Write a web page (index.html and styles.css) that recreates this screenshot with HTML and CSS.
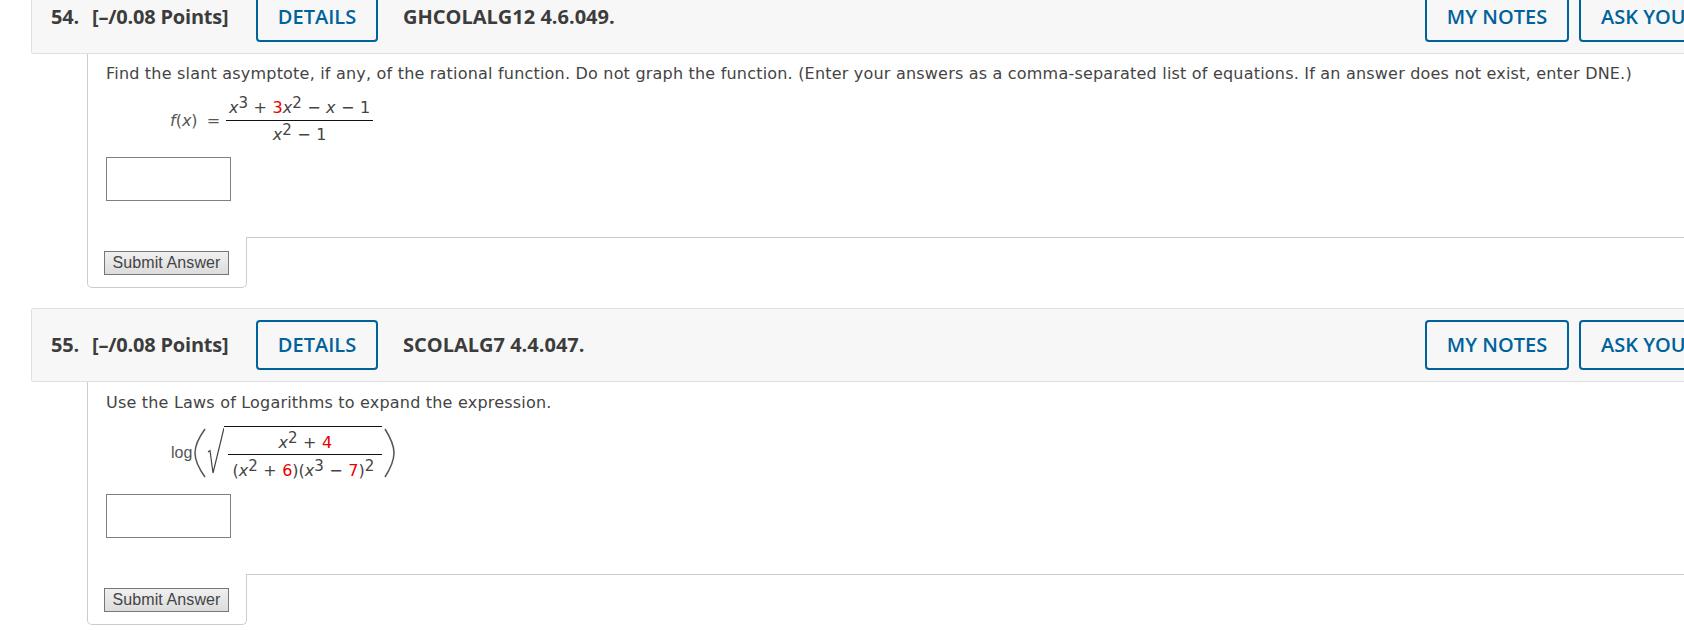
FILE: index.html
```html
<!DOCTYPE html>
<html lang="en">
<head>
<meta charset="utf-8">
<title>Questions</title>
<link rel="stylesheet" href="styles.css">
</head>
<body>
<main class="page">
  <section class="question">
    <header class="qhead">
      <span class="points"><span class="num">54.</span>[–/0.08 Points]</span>
      <a class="btn details">DETAILS</a>
      <span class="ref">GHCOLALG12 4.6.049.</span>
      <a class="btn notes">MY NOTES</a>
      <a class="btn ask">ASK YOUR TEACHER</a>
    </header>
    <div class="content">
      <p class="prompt">Find the slant asymptote, if any, of the rational function. Do not graph the function. (Enter your answers as a comma-separated list of equations. If an answer does not exist, enter DNE.)</p>
      <div class="math math-one">
        <span class="lhs"><i>f</i>(<i>x</i>) =</span>
        <span class="frac">
          <span class="top"><i>x</i><sup>3</sup> + <b class="red">3</b><i>x</i><sup>2</sup> − <i>x</i> − 1</span>
          <span class="bot"><i>x</i><sup>2</sup> − 1</span>
        </span>
      </div>
      <input class="answer" type="text" aria-label="Answer">
    </div>
    <div class="foot">
      <div class="submit-box"><button class="submit" type="button">Submit Answer</button></div>
      <div class="foot-rest"></div>
    </div>
  </section>
  <section class="question">
    <header class="qhead">
      <span class="points"><span class="num">55.</span>[–/0.08 Points]</span>
      <a class="btn details">DETAILS</a>
      <span class="ref">SCOLALG7 4.4.047.</span>
      <a class="btn notes">MY NOTES</a>
      <a class="btn ask">ASK YOUR TEACHER</a>
    </header>
    <div class="content">
      <p class="prompt prompt-low">Use the Laws of Logarithms to expand the expression.</p>
      <div class="math math-two">
        <span class="log">log</span>
        <svg class="paren" width="12" height="50" viewBox="0 0 12 50" aria-hidden="true"><path d="M11 1C3 12 1 18 1 25S3 38 11 49" fill="none" stroke="#555" stroke-width="1.500"/></svg>
        <svg class="radical" width="17" height="50" viewBox="0 0 17 50" aria-hidden="true"><path d="M1 24L3 22.500L6 45L17 0" fill="none" stroke="#444" stroke-width="1.200"/></svg>
        <span class="radicand">
          <span class="frac frac-root">
            <span class="top"><i>x</i><sup>2</sup> + <b class="red">4</b></span>
            <span class="bot">(<i>x</i><sup>2</sup> + <b class="red">6</b>)(<i>x</i><sup>3</sup> − <b class="red">7</b>)<sup>2</sup></span>
          </span>
        </span>
        <svg class="paren paren-close" width="11" height="50" viewBox="0 0 11 50" aria-hidden="true"><path d="M1 1C8 12 10 18 10 25S8 38 1 49" fill="none" stroke="#555" stroke-width="1.500"/></svg>
      </div>
      <input class="answer" type="text" aria-label="Answer">
    </div>
    <div class="foot">
      <div class="submit-box"><button class="submit" type="button">Submit Answer</button></div>
      <div class="foot-rest"></div>
    </div>
  </section>
</main>
</body>
</html>
```
FILE: styles.css
```css
html, body {
  margin: 0;
  padding: 0;
  height: 630px;
  overflow: hidden;
  background: #fff;
}

.page {
  width: 1900px;
  margin: -20px 0 0 31px;
  font-family: "DejaVu Sans", sans-serif;
  color: #444;
}

.question {
  margin-bottom: 20px;
}

.qhead {
  display: flex;
  align-items: center;
  height: 72px;
  padding: 0 0 0 19px;
  background: #f7f7f7;
  border: 1px solid #e0e0e0;
  border-radius: 2px;
  font-family: "Open Sans", sans-serif;
  font-size: 20px;
  font-weight: 700;
  color: #3c3c3c;
}

.points {
  width: 205px;
  padding-bottom: 2px;
  letter-spacing: -0.2px;
  white-space: nowrap;
}

.num {
  margin-right: 13px;
}

.btn {
  box-sizing: border-box;
  display: flex;
  align-items: center;
  justify-content: center;
  height: 50px;
  width: 122px;
  padding-bottom: 2px;
  border: 2px solid #00629b;
  border-radius: 4px;
  color: #00629b;
  font-weight: 600;
  white-space: nowrap;
}

.details {
  flex: none;
}

.ref {
  margin-left: 25px;
  width: 1022px;
  padding-bottom: 2px;
  white-space: nowrap;
}

.notes {
  width: 144px;
  flex: none;
}

.ask {
  margin-left: 10px;
  width: 234px;
  flex: none;
}

.content {
  margin-left: 56px;
  padding: 0 0 36px 18px;
  border-left: 1px solid #ccc;
}

.prompt {
  margin: 0;
  padding-top: 10px;
  font-size: 16px;
  letter-spacing: 0.2px;
  line-height: 20px;
  white-space: nowrap;
}

.prompt-low {
  padding-top: 11px;
}

.math {
  display: flex;
  align-items: center;
  font-size: 16px;
  word-spacing: 0.4px;
}

.math-one {
  height: 70px;
  padding: 1px 0 0 64px;
}

.lhs {
  margin-right: 6px;
  word-spacing: 4px;
  color: #555;
}

.frac {
  display: inline-flex;
  flex-direction: column;
  align-items: center;
}

.top {
  padding: 2px 3px 0;
  line-height: 24px;
  white-space: nowrap;
}

.bot {
  align-self: stretch;
  text-align: center;
  padding: 2px 3px 0;
  border-top: 1px solid #111;
  line-height: 24px;
  white-space: nowrap;
}

sup {
  font-size: 15px;
  line-height: 0;
  vertical-align: 5px;
}

.red {
  color: #e60000;
  font-weight: 400;
}

.answer {
  box-sizing: border-box;
  display: block;
  width: 125px;
  height: 44px;
  margin: 2px 0 0;
  padding: 0;
  background: #fff;
  border: 1px solid #808080;
  border-radius: 0;
}

.foot {
  display: flex;
  margin: 0 0 0 56px;
}

.submit-box {
  box-sizing: border-box;
  width: 160px;
  height: 51px;
  padding: 14px 0 0 16px;
  border: 1px solid #ccc;
  border-top: 0;
  border-radius: 0 0 5px 5px;
}

.submit {
  display: block;
  box-sizing: border-box;
  width: 125px;
  height: 24px;
  padding: 0;
  background: linear-gradient(#f0f0f0, #dcdcdc);
  border: 1px solid #777;
  border-radius: 0;
  font-family: "Liberation Sans", sans-serif;
  font-size: 16px;
  letter-spacing: 0.1px;
  color: #444;
}

.foot-rest {
  flex: 1;
  border-top: 1px solid #ccc;
}

.math-two {
  height: 79px;
  margin-bottom: 2px;
  padding-left: 65px;
}

.log {
  font-family: "Liberation Sans", sans-serif;
  font-size: 16px;
  color: #555;
  margin-right: 2px;
}

.radical {
  margin-left: 1px;
}

.paren-close {
  margin-left: 2px;
}

.radicand {
  width: 158px;
  margin-bottom: -3px;
  border-top: 1px solid #111;
}

.frac-root {
  width: 154px;
  padding-left: 4px;
}

.frac-root .top {
  padding: 4px 0 0;
  line-height: 23px;
}

.frac-root .bot {
  padding: 4px 4px 0 0;
  line-height: 24px;
}
```
